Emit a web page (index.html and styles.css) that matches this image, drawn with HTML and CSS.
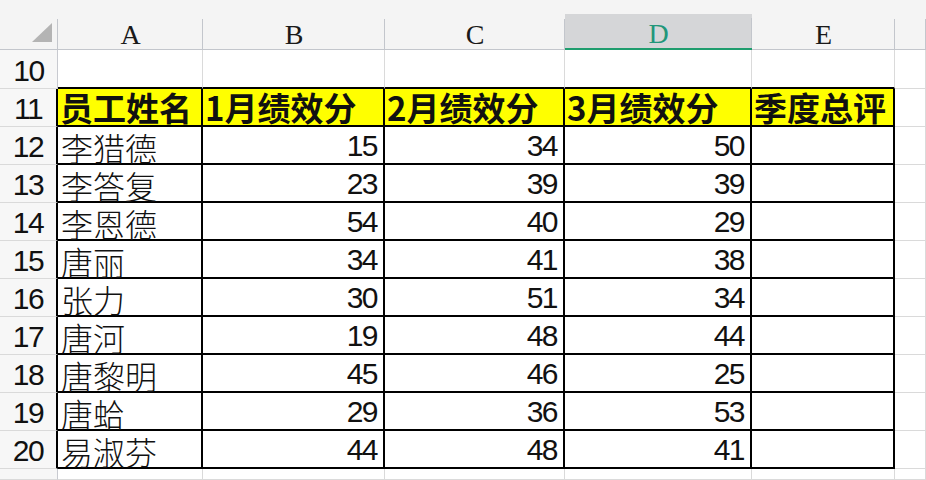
FILE: index.html
```html
<!DOCTYPE html>
<html lang="zh-CN">
<head>
<meta charset="utf-8">
<title>绩效表</title>
<link rel="stylesheet" href="styles.css">
</head>
<body>
<div class="sheet">
  <div class="corner"><svg class="tri" width="20" height="19" viewBox="0 0 20 19"><polygon points="20,0 20,19 0,19" fill="#b4b4b4"/></svg></div>
  <div class="colhdr">A</div>
  <div class="colhdr">B</div>
  <div class="colhdr">C</div>
  <div class="colhdr sel">D</div>
  <div class="colhdr">E</div>
  <div class="colhdr"></div>

  <div class="rowhdr">10</div>
  <div class="cell above"></div><div class="cell above"></div><div class="cell above"></div><div class="cell above"></div><div class="cell above"></div><div class="cell"></div>

  <div class="rowhdr tb">11</div>
  <div class="cell t th first">员工姓名</div><div class="cell t th">1月绩效分</div><div class="cell t th">2月绩效分</div><div class="cell t th">3月绩效分</div><div class="cell t th">季度总评</div><div class="cell"></div>

  <div class="rowhdr tb">12</div>
  <div class="cell t name first">李猎德</div><div class="cell t num">15</div><div class="cell t num">34</div><div class="cell t num">50</div><div class="cell t"></div><div class="cell"></div>

  <div class="rowhdr tb">13</div>
  <div class="cell t name first">李答复</div><div class="cell t num">23</div><div class="cell t num">39</div><div class="cell t num">39</div><div class="cell t"></div><div class="cell"></div>

  <div class="rowhdr tb">14</div>
  <div class="cell t name first">李恩德</div><div class="cell t num">54</div><div class="cell t num">40</div><div class="cell t num">29</div><div class="cell t"></div><div class="cell"></div>

  <div class="rowhdr tb">15</div>
  <div class="cell t name first">唐丽</div><div class="cell t num">34</div><div class="cell t num">41</div><div class="cell t num">38</div><div class="cell t"></div><div class="cell"></div>

  <div class="rowhdr tb">16</div>
  <div class="cell t name first">张力</div><div class="cell t num">30</div><div class="cell t num">51</div><div class="cell t num">34</div><div class="cell t"></div><div class="cell"></div>

  <div class="rowhdr tb">17</div>
  <div class="cell t name first">唐河</div><div class="cell t num">19</div><div class="cell t num">48</div><div class="cell t num">44</div><div class="cell t"></div><div class="cell"></div>

  <div class="rowhdr tb">18</div>
  <div class="cell t name first">唐黎明</div><div class="cell t num">45</div><div class="cell t num">46</div><div class="cell t num">25</div><div class="cell t"></div><div class="cell"></div>

  <div class="rowhdr tb">19</div>
  <div class="cell t name first">唐蛤</div><div class="cell t num">29</div><div class="cell t num">36</div><div class="cell t num">53</div><div class="cell t"></div><div class="cell"></div>

  <div class="rowhdr tb">20</div>
  <div class="cell t name first">易淑芬</div><div class="cell t num">44</div><div class="cell t num">48</div><div class="cell t num">41</div><div class="cell t"></div><div class="cell"></div>

  <div class="rowhdr"></div>
  <div class="cell"></div><div class="cell"></div><div class="cell"></div><div class="cell"></div><div class="cell"></div><div class="cell"></div>
</div>
</body>
</html>
```

FILE: styles.css
```css
* { box-sizing: border-box; }
html, body { margin: 0; padding: 0; background: #ffffff; }
body { overflow: hidden; }

.sheet {
  display: grid;
  grid-template-columns: 58px 145px 182px 180px 187px 143px 31px;
  grid-template-rows: 50px 39px repeat(10, 38px) 1fr;
  width: 926px;
  height: 480px;
  color: #111;
}

.corner {
  display: flex;
  justify-content: flex-end;
  align-items: flex-end;
  padding: 0 6px 7px 0;
  background: linear-gradient(#c3c6cc, #c3c6cc) right bottom / 1px 30px no-repeat, #f4f4f4;
  border-bottom: 1px solid #c3c6cc;
}
.tri { display: block; }

.colhdr {
  display: flex;
  justify-content: center;
  align-items: flex-end;
  padding-bottom: 0;
  font-family: "Liberation Serif", serif;
  font-size: 28px;
  line-height: 1;
  color: #1a1a1a;
  background: linear-gradient(#c3c6cc, #c3c6cc) right bottom / 1px 30px no-repeat, #f4f4f4;
  border-bottom: 1px solid #c3c6cc;
}
.colhdr.sel {
  color: #21977a;
  background: linear-gradient(#c3c6cc, #c3c6cc) right bottom / 1px 30px no-repeat,
              linear-gradient(#f4f4f4 14px, #d5d6d8 14px);
  border-bottom: 2px solid #1f9d6e;
}

.rowhdr {
  display: flex;
  justify-content: center;
  align-items: flex-end;
  padding-bottom: 2px;
  font-family: "Liberation Sans", sans-serif;
  font-size: 30px;
  line-height: 1;
  letter-spacing: -1.5px;
  background: #f7f7f7;
  border-right: 1px solid #c8cad0;
  border-bottom: 1px solid #dadada;
}
.rowhdr.tb { border-right: 2px solid #000; }

.cell {
  display: flex;
  align-items: flex-end;
  min-width: 0;
  white-space: nowrap;
  border-right: 1px solid #dadada;
  border-bottom: 1px solid #dadada;
}
.cell.above { border-bottom: 2px solid #000; }
.cell.t {
  border-right: 2px solid #000;
  border-bottom: 2px solid #000;
}

.th {
  background: #ffff00;
  font-family: "Noto Sans CJK SC", sans-serif;
  font-weight: 700;
  font-size: 33px;
  line-height: 1;
  padding-left: 2px;
  padding-bottom: 1px;
}

.name {
  font-family: "Noto Sans CJK SC", sans-serif;
  font-weight: 300;
  font-size: 32px;
  line-height: 1;
  padding-left: 3px;
}

.num {
  justify-content: flex-end;
  font-family: "Liberation Sans", sans-serif;
  font-size: 30px;
  line-height: 1;
  letter-spacing: -1.5px;
  padding-right: 6px;
  padding-bottom: 2px;
}
```
